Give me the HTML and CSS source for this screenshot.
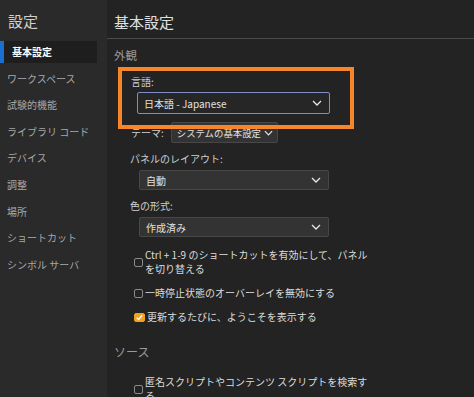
FILE: index.html
```html
<!DOCTYPE html>
<html lang="ja">
<head>
  <meta charset="UTF-8">
  <meta name="viewport" content="width=device-width, initial-scale=1.0">
  <title>設定</title>
  <link rel="stylesheet" href="styles.css">
</head>
<body>

<div class="app">
  <nav class="sidebar">
    <h1>設定</h1>
    <div class="nav-item active">基本設定</div>
    <div class="nav-item">ワークスペース</div>
    <div class="nav-item">試験的機能</div>
    <div class="nav-item">ライブラリ コード</div>
    <div class="nav-item">デバイス</div>
    <div class="nav-item">調整</div>
    <div class="nav-item">場所</div>
    <div class="nav-item">ショートカット</div>
    <div class="nav-item">シンボル サーバ</div>
  </nav>

  <main class="main">
    <h2 class="page-title">基本設定</h2>

    <div class="section-title">外観</div>

    <div class="field field-lang">
      <label>言語:</label>
      <div class="select focused">
        <span>日本語 - Japanese</span>
        <svg class="chevron" viewBox="0 0 10 6" width="10" height="6"><path d="M1 1l4 4 4-4" fill="none" stroke="#e6e6e6" stroke-width="1.3"/></svg>
      </div>
    </div>

    <div class="field-inline">
      <label>テーマ:</label>
      <div class="select select-theme">
        <span>システムの基本設定</span>
        <svg class="chevron" viewBox="0 0 10 6" width="9" height="6"><path d="M1 1l4 4 4-4" fill="none" stroke="#e6e6e6" stroke-width="1.3"/></svg>
      </div>
    </div>

    <div class="field">
      <label>パネルのレイアウト:</label>
      <div class="select">
        <span>自動</span>
        <svg class="chevron" viewBox="0 0 10 6" width="10" height="6"><path d="M1 1l4 4 4-4" fill="none" stroke="#e6e6e6" stroke-width="1.3"/></svg>
      </div>
    </div>

    <div class="field">
      <label>色の形式:</label>
      <div class="select">
        <span>作成済み</span>
        <svg class="chevron" viewBox="0 0 10 6" width="10" height="6"><path d="M1 1l4 4 4-4" fill="none" stroke="#e6e6e6" stroke-width="1.3"/></svg>
      </div>
    </div>

    <div class="check-row first">
      <span class="box"></span>
      <span class="check-text">Ctrl + 1-9 のショートカットを有効にして、パネルを切り替える</span>
    </div>
    <div class="check-row">
      <span class="box"></span>
      <span class="check-text">一時停止状態のオーバーレイを無効にする</span>
    </div>
    <div class="check-row">
      <span class="box checked">
        <svg viewBox="0 0 10 10" width="9" height="9"><path d="M2 5.2l2 2 4-4.6" fill="none" stroke="#fff" stroke-width="1.6"/></svg>
      </span>
      <span class="check-text">更新するたびに、ようこそを表示する</span>
    </div>

    <div class="section-title sources">ソース</div>

    <div class="check-row last">
      <span class="box"></span>
      <span class="check-text">匿名スクリプトやコンテンツ スクリプトを検索する</span>
    </div>

    <div class="highlight"></div>
  </main>
</div>

</body>
</html>
```

FILE: styles.css
```css
* {
  box-sizing: border-box;
}

body {
  margin: 0;
  font-family: 'Noto Sans CJK JP', 'Noto Sans', sans-serif;
  background: #232323;
  color: #d8d8d8;
  overflow: hidden;
}

.app {
  display: flex;
  height: 100vh;
}

.sidebar {
  flex: 0 0 107px;
  background: #2a2a2a;
}

.sidebar h1 {
  margin: 0;
  height: 41px;
  padding: 11px 0 0 8px;
  font-size: 15px;
  font-weight: normal;
  line-height: 20px;
  color: #d0d0d0;
}

.nav-item {
  height: 26.6px;
  line-height: 22px;
  padding-left: 7px;
  font-size: 10px;
  color: #a8a8a8;
  white-space: nowrap;
}

.nav-item.active {
  height: 22px;
  margin: 0 10px 4.6px 0;
  padding-left: 8px;
  border-left: 4px solid #1b6fd0;
  background: #1e1e1e;
  color: #fff;
  font-weight: bold;
}

.main {
  flex: 1;
  position: relative;
}

.page-title {
  margin: 0;
  padding: 12px 0 6px 7px;
  font-size: 15px;
  font-weight: normal;
  line-height: 20px;
  color: #e0e0e0;
  border-bottom: 1px solid #4a4a4a;
}

.section-title {
  padding: 8px 0 0 7px;
  font-size: 11.5px;
  line-height: 16px;
  color: #9a9a9a;
}

.section-title.sources {
  padding-top: 20px;
  font-size: 12px;
}

label {
  display: block;
  font-size: 10px;
  line-height: 14px;
  color: #cfcfcf;
}

.field {
  margin-top: 9px;
  padding-left: 23px;
}

.field .select {
  margin: 4px 0 0 9px;
  width: 190px;
  height: 20px;
}

.field-lang {
  margin-top: 12px;
  padding-left: 24px;
}

.field-lang .select {
  margin: 3px 0 0 6px;
  width: 193px;
  height: 22px;
}

.select {
  display: flex;
  align-items: center;
  justify-content: space-between;
  padding: 0 7px 0 6px;
  background: #333;
  border: 1px solid #474747;
  border-radius: 2px;
  font-size: 10px;
  color: #e2e2e2;
  white-space: nowrap;
}

.select.focused {
  background: #262626;
  border: 1.5px solid #7f8fc6;
}

.field-inline {
  display: flex;
  align-items: center;
  gap: 7px;
  margin-top: 8px;
  padding-left: 24px;
}

.select-theme {
  height: 21px;
  gap: 3px;
  padding: 0 4px 0 5px;
  font-size: 9.4px;
}

.check-row {
  display: flex;
  align-items: center;
  gap: 2px;
  margin-top: 10px;
  padding-left: 27px;
}

.check-row.first {
  margin-top: 11px;
}

.check-row.last {
  margin-top: 15px;
}

.check-text {
  max-width: 228px;
  font-size: 10px;
  line-height: 14px;
  color: #dcdcdc;
}

.box {
  flex: 0 0 9px;
  height: 9px;
  border: 1px solid #8a8a8a;
  border-radius: 2px;
  display: flex;
  align-items: center;
  justify-content: center;
}

.box.checked {
  background: #f1a11e;
  border-color: #f1a11e;
}

.highlight {
  position: absolute;
  left: 11px;
  top: 67px;
  width: 236px;
  height: 62px;
  border: 4px solid #f7862b;
}
```
